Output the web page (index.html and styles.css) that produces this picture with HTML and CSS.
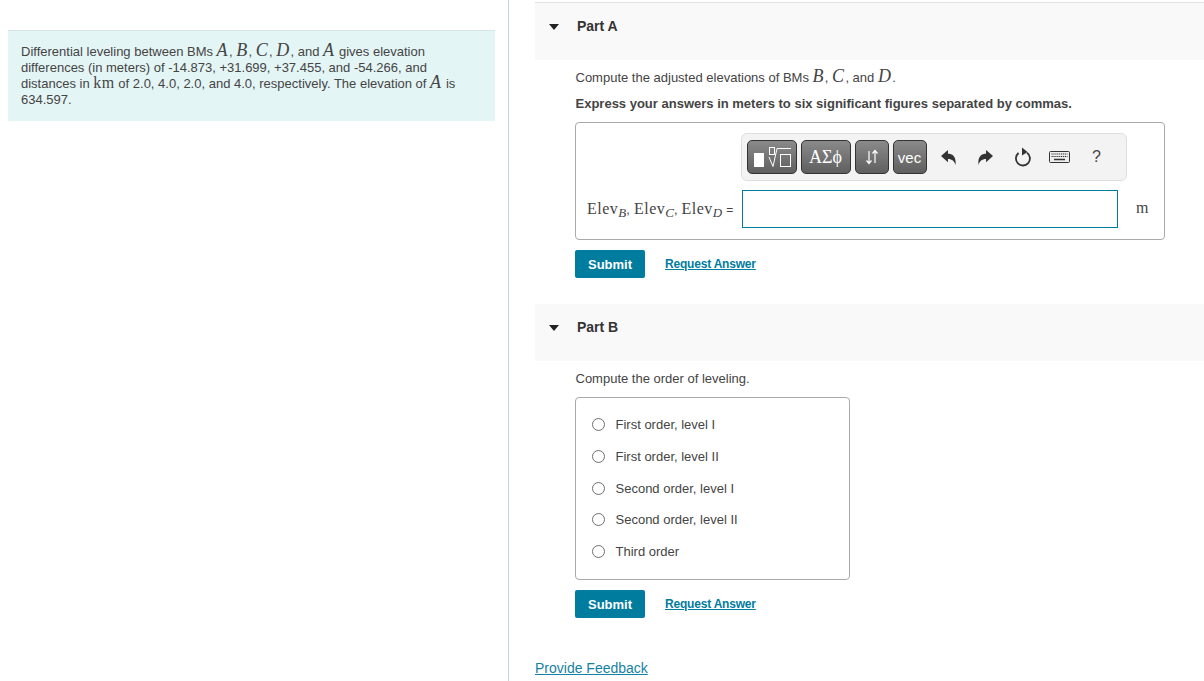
FILE: index.html
```html
<!DOCTYPE html>
<html lang="en">
<head>
<meta charset="utf-8">
<title>Part A and Part B</title>
<link rel="stylesheet" href="styles.css">
</head>
<body>
<div class="page">
  <aside class="left">
    <div class="intro">
      <p>Differential leveling between BMs <i class="m">A</i>, <i class="m">B</i>, <i class="m">C</i>, <i class="m">D</i>, and <i class="m">A</i> gives elevation differences (in meters) of -14.873, +31.699, +37.455, and -54.266, and distances in <span class="mr">km</span> of 2.0, 4.0, 2.0, and 4.0, respectively. The elevation of <i class="m">A</i> is 634.597.</p>
    </div>
  </aside>
  <main class="right">
    <section class="part part-a">
      <header class="part-head"><span class="caret"></span><h2>Part A</h2></header>
      <div class="part-body">
        <p class="prompt">Compute the adjusted elevations of BMs <i class="m">B</i>, <i class="m">C</i>, and <i class="m">D</i>.</p>
        <p class="instr">Express your answers in meters to six significant figures separated by commas.</p>
        <div class="answer">
          <div class="toolbar-row">
            <div class="toolbar">
              <button class="tb tb-tpl" aria-label="templates">
                <svg width="44" height="26" viewBox="0 0 44 26"><rect x="4" y="9" width="10" height="14" fill="#fff"/><path d="M19 13L23 22.500 27 4.500H41" fill="none" stroke="#fff" stroke-width="1"/><rect x="19.500" y="3.500" width="5" height="7" fill="none" stroke="#fff" stroke-width="1"/><rect x="30.500" y="10.500" width="10" height="12" fill="none" stroke="#fff" stroke-width="1"/></svg>
              </button>
              <button class="tb tb-greek">ΑΣϕ</button>
              <button class="tb tb-arrow" aria-label="arrows">
                <svg width="16" height="18" viewBox="0 0 16 18"><path d="M5 3v12M2.500 12.500L5 15.500l2.500-3M11 15V3M8.500 5.500L11 2.500l2.500 3" fill="none" stroke="#fff" stroke-width="1.200"/></svg>
              </button>
              <button class="tb tb-vec">vec</button>
              <span class="ti ti-undo"><svg width="15" height="15" viewBox="0 0 14 14"><path d="M0 5.500L6.500 0V3.500C11 3.500 14.500 6.500 13.500 14 12.500 10.500 10.500 8.500 6.500 8.500V11.500Z" fill="#333"/></svg></span>
              <span class="ti ti-redo"><svg width="15" height="15" viewBox="0 0 14 14"><path d="M14 5.500L7.500 0V3.500C3 3.500-.5 6.500.5 14 1.500 10.500 3.500 8.500 7.500 8.500V11.500Z" fill="#333"/></svg></span>
              <span class="ti ti-reset"><svg width="18" height="20" viewBox="0 0 18 20"><path d="M13 5.800A7 7 0 1 1 4.600 6" fill="none" stroke="#333" stroke-width="1.800"/><path d="M8 .5L13.500 5 8 8.500z" fill="#333"/></svg></span>
              <span class="ti ti-kbd"><svg width="21" height="12" viewBox="0 0 21 12"><rect x=".5" y=".5" width="20" height="11" rx="1" fill="#eee" stroke="#333"/><path d="M2.500 3h16M2.500 5.500h16" stroke="#333" stroke-width="1.200" stroke-dasharray="1.200 .7"/><path d="M5 8.500h11" stroke="#333" stroke-width="1.500"/></svg></span>
              <span class="ti ti-help">?</span>
            </div>
          </div>
          <div class="input-row">
            <span class="label"><span class="mr">Elev</span><sub>B</sub><span class="cm">,</span><span class="mr">Elev</span><sub>C</sub><span class="cm">,</span><span class="mr">Elev</span><sub>D</sub><span class="eq">=</span></span>
            <div class="field"></div>
            <span class="unit">m</span>
          </div>
        </div>
        <div class="actions"><button class="submit">Submit</button><a class="req" href="#">Request Answer</a></div>
      </div>
    </section>
    <section class="part part-b">
      <header class="part-head"><span class="caret"></span><h2>Part B</h2></header>
      <div class="part-body">
        <p class="prompt">Compute the order of leveling.</p>
        <div class="choices">
          <label class="choice"><span class="radio"></span>First order, level I</label>
          <label class="choice"><span class="radio"></span>First order, level II</label>
          <label class="choice"><span class="radio"></span>Second order, level I</label>
          <label class="choice"><span class="radio"></span>Second order, level II</label>
          <label class="choice"><span class="radio"></span>Third order</label>
        </div>
        <div class="actions"><button class="submit">Submit</button><a class="req" href="#">Request Answer</a></div>
      </div>
    </section>
    <a class="feedback" href="#">Provide Feedback</a>
  </main>
</div>
</body>
</html>
```

FILE: styles.css
```css
* { box-sizing: border-box; }
html, body { margin: 0; height: 681px; overflow: hidden; background: #fff; }
body { font-family: "Liberation Sans", Arial, sans-serif; font-size: 13px; color: #444; }
p, h2 { margin: 0; }
.page { display: flex; height: 681px; }
.left { width: 509px; flex: none; border-right: 1px solid #c4d3de; padding: 30px 13px 0 8px; }
.intro { background: #e4f5f6; border-top: 1px solid #d8e4e8; height: 91px; padding: 13px 30px 0 13px; line-height: 16px; }
.m { font-family: "Liberation Serif", serif; font-style: italic; font-size: 18px; line-height: 0; letter-spacing: 1.300px; }
.mr { font-family: "Liberation Serif", serif; font-size: 16px; line-height: 0; letter-spacing: .5px; }
.right { flex: 1; padding: 2px 0 0 26px; min-width: 0; }
.part-head { display: flex; align-items: flex-start; height: 58px; background: #f9f9f9; padding: 15px 0 0 14px; }
.part-a .part-head { border-top: 1px solid #e2e2e2; }
.part-b { margin-top: 26px; }
.part-b .part-head { height: 57px; padding-top: 15px; }
.caret { width: 0; height: 0; margin-top: 6px; border-left: 5.500px solid transparent; border-right: 5.500px solid transparent; border-top: 6px solid #222; }
h2 { font-size: 14px; line-height: 17px; font-weight: 700; color: #333; margin-left: 18px; }
.part-body { padding: 9px 39px 0 40px; }
.prompt { line-height: 17px; padding-left: .5px; }
.instr { margin-top: 9px; font-weight: 700; line-height: 17px; padding-left: .5px; }
.answer { margin-top: 10px; height: 118px; border: 1px solid #a9a9a9; border-radius: 4px; padding: 10px 14px 0 11px; }
.toolbar-row { display: flex; justify-content: flex-end; padding-right: 23px; }
.toolbar { display: flex; align-items: center; width: 386px; height: 48px; background: #f3f3f3; border: 1px solid #dedede; border-radius: 6px; padding-left: 5px; }
.tb { display: flex; align-items: center; justify-content: center; height: 34px; padding: 0; border: 1px solid #333; border-radius: 5px; background: linear-gradient(#8a8a8a, #5f5f5f); color: #fff; margin-right: 4px; }
.tb-tpl { width: 50px; margin-right: 3.500px; }
.tb-greek { width: 50px; font-family: "Liberation Serif", serif; font-size: 18px; }
.tb-arrow { width: 34px; }
.tb-vec { width: 34px; font-family: "Liberation Sans", sans-serif; font-size: 15px; margin-right: 3.500px; }
.ti { display: flex; justify-content: center; align-items: center; width: 37px; height: 34px; }
.ti-help { font-size: 16px; color: #444; }
.input-row { display: flex; align-items: center; margin-top: 9px; }
.label { display: block; width: 155px; flex: none; white-space: nowrap; font-size: 13px; }
.label sub { font-family: "Liberation Serif", serif; font-style: italic; font-size: 13px; line-height: 0; vertical-align: -3px; }
.cm { margin-right: 4px; }
.eq { margin-left: 4px; font-size: 12px; }
.field { width: 376px; height: 38px; border: 1px solid #007c9e; background: #fff; }
.unit { margin-left: 18px; margin-top: -2px; font-family: "Liberation Serif", serif; font-size: 16px; }
.actions { display: flex; align-items: center; margin-top: 10px; }
.submit { width: 70px; height: 28px; border: 0; border-radius: 2px; background: #007c9f; color: #fff; font: 700 13px "Liberation Sans", sans-serif; padding: 0; }
.req { margin-left: 20px; font-size: 12px; font-weight: 700; color: #007c9f; letter-spacing: -.2px; }
.choices { margin-top: 10px; width: 275px; height: 183px; border: 1px solid #a9a9a9; border-radius: 4px; padding: 11px 0 0 16px; }
.choice { display: flex; align-items: center; height: 31.700px; }
.radio { width: 13px; height: 13px; border: 1px solid #6f6f6f; border-radius: 50%; margin-right: 10.500px; }
.feedback { display: inline-block; margin-top: 42px; color: #1582a3; font-size: 14px; }
```
